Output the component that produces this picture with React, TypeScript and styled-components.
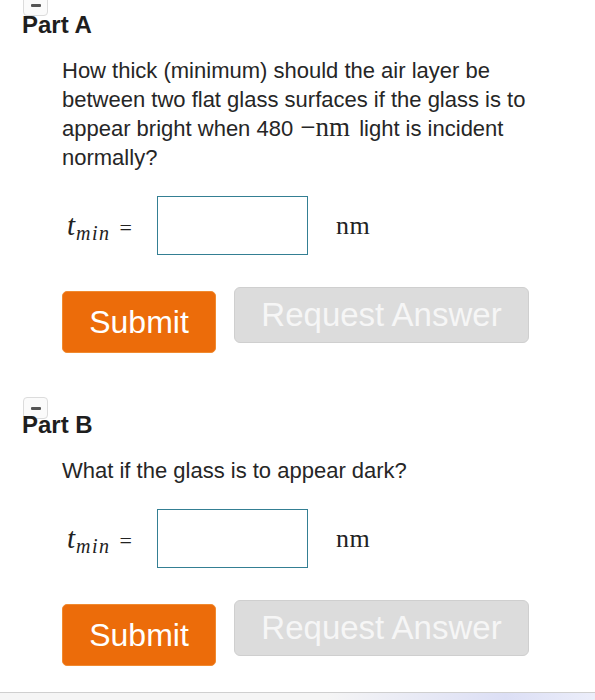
import React from "react";
import styled, { createGlobalStyle } from "styled-components";

const GlobalStyle = createGlobalStyle`
  body {
    margin: 0;
    background: #fff;
    font-family: "Liberation Sans", Arial, sans-serif;
  }
`;

const Page = styled.div`
  min-height: 700px;
  display: flex;
  flex-direction: column;
`;

const Content = styled.div`
  flex: 1;
  padding: 11px 0 0 22px;
`;

const Section = styled.section<{ $gap?: number }>`
  margin-top: ${(p) => p.$gap || 0}px;
`;

const Heading = styled.h2`
  position: relative;
  margin: 0;
  font-size: 24px;
  line-height: 28px;
  font-weight: bold;
  color: #1e1e1e;
`;

const Toggle = styled.span<{ $top: number }>`
  position: absolute;
  left: 1px;
  top: ${(p) => p.$top}px;
  width: 23px;
  height: 20px;
  border: 1px solid #dcdcdc;
  border-radius: 4px;
  background: rgba(250, 250, 250, 0.85);
  display: flex;
  align-items: center;
  justify-content: center;
  &::after {
    content: "";
    width: 10px;
    height: 3px;
    border-radius: 1px;
    background: #555;
  }
`;

const HeadingText = styled.span`
  position: relative;
`;

const Body = styled.div`
  padding-left: 40px;
  max-width: 483px;
`;

const Question = styled.p`
  margin: 17px 0 0;
  font-size: 22px;
  line-height: 29px;
  color: #262626;
`;

const MathInline = styled.span`
  display: inline-block;
  margin: 0 3px 0 1px;
  font-family: "Liberation Serif", "Times New Roman", serif;
  font-size: 27px;
  line-height: 22px;
`;

const MathRow = styled.div`
  margin-top: 24px;
  display: flex;
  align-items: center;
`;

const Label = styled.span`
  box-sizing: border-box;
  width: 95px;
  padding-left: 5px;
  display: flex;
  align-items: baseline;
  font-family: "Liberation Serif", "Times New Roman", serif;
  color: #222;
`;

const Var = styled.i`
  font-size: 29px;
`;

const Sub = styled.i`
  font-size: 20px;
  letter-spacing: 1.5px;
  position: relative;
  top: 5px;
  margin-left: 1px;
`;

const Eq = styled.span`
  font-size: 22px;
  margin-left: 9px;
`;

const AnswerBox = styled.input`
  width: 151px;
  height: 59px;
  margin: 0;
  box-sizing: border-box;
  border: 1.5px solid #347f93;
  outline: none;
  background: #fff;
`;

const Unit = styled.span`
  margin-left: 28px;
  font-family: "Liberation Serif", "Times New Roman", serif;
  font-size: 26px;
  letter-spacing: 0.5px;
  color: #222;
`;

const Actions = styled.div`
  margin-top: 32px;
  display: flex;
  align-items: flex-start;
  gap: 18px;
`;

const SubmitButton = styled.button`
  margin-top: 4px;
  width: 154px;
  height: 62px;
  border: 1px solid #f08a30;
  border-radius: 5px;
  background: #ec6c0a;
  color: #fff;
  font-family: "Liberation Sans", Arial, sans-serif;
  font-size: 32px;
  padding: 0;
`;

const RequestButton = styled.button`
  width: 295px;
  height: 56px;
  border: 1px solid #cfcfcf;
  border-radius: 6px;
  background: #dcdcdc;
  color: #f6f6f6;
  font-family: "Liberation Sans", Arial, sans-serif;
  font-size: 33px;
  padding: 0;
`;

const Footer = styled.div`
  height: 7px;
  border-top: 1px solid #cfcfcf;
  background: linear-gradient(to right, #f5f5f5 55%, #dcdff5 85%, #eceefa);
`;

type PartProps = {
  name: string;
  gap?: number;
  toggleTop: number;
  children: React.ReactNode;
};

function Part({ name, gap, toggleTop, children }: PartProps) {
  return (
    <Section $gap={gap}>
      <Heading>
        <Toggle $top={toggleTop} />
        <HeadingText>Part {name}</HeadingText>
      </Heading>
      <Body>
        <Question>{children}</Question>
        <MathRow>
          <Label>
            <Var>t</Var>
            <Sub>min</Sub>
            <Eq>=</Eq>
          </Label>
          <AnswerBox type="text" />
          <Unit>nm</Unit>
        </MathRow>
        <Actions>
          <SubmitButton>Submit</SubmitButton>
          <RequestButton>Request Answer</RequestButton>
        </Actions>
      </Body>
    </Section>
  );
}

export default function App() {
  return (
    <Page>
      <GlobalStyle />
      <Content>
        <Part name="A" toggleTop={-17}>
          How thick (minimum) should the air layer be between two flat glass
          surfaces if the glass is to appear bright when 480{" "}
          <MathInline>−nm</MathInline> light is incident normally?
        </Part>
        <Part name="B" gap={58} toggleTop={-14}>
          What if the glass is to appear dark?
        </Part>
      </Content>
      <Footer />
    </Page>
  );
}
